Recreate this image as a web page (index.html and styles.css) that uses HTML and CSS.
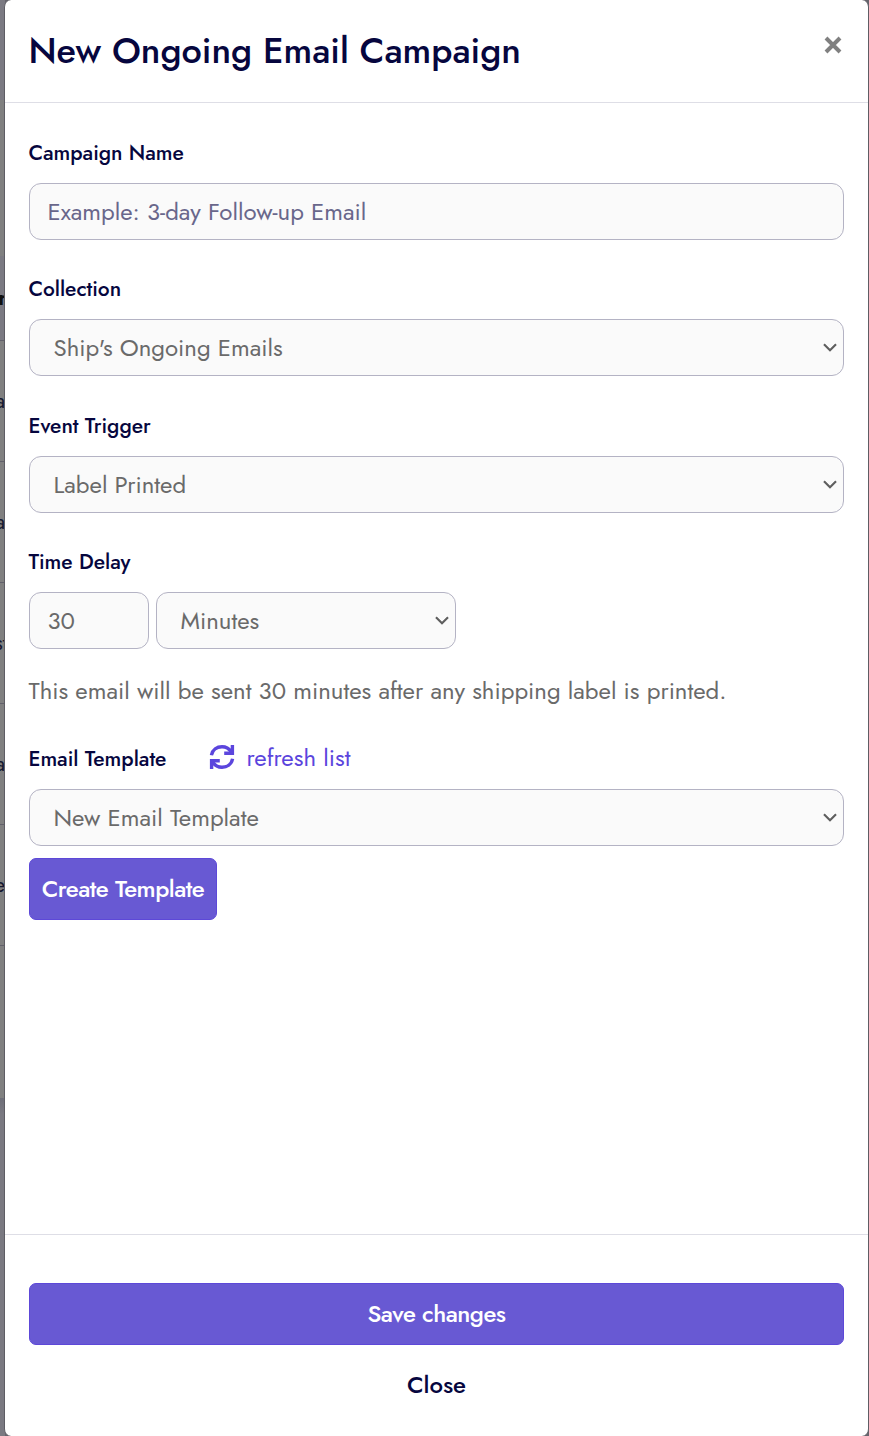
FILE: index.html
```html
<!DOCTYPE html>
<html lang="en">
<head>
    <meta charset="UTF-8">
    <meta name="viewport" content="width=device-width, initial-scale=1.0">
    <title>New Ongoing Email Campaign</title>
    <link rel="stylesheet" href="styles.css">
</head>
<body>
    <!-- Page under the modal -->
    <div class="page">
        <div class="page-top"></div>
        <div class="page-space"></div>
        <div class="page-head"><b>r</b></div>
        <div class="page-row"><span>a</span></div>
        <div class="page-row"><span>a</span></div>
        <div class="page-row middle"><span>st</span></div>
        <div class="page-row"><span>a</span></div>
        <div class="page-row"><span>e</span></div>
        <div class="page-end"></div>
        <div class="page-bottom"></div>
    </div>

    <div class="modal">
        <div class="modal-header">
            <h1>New Ongoing Email Campaign</h1>
            <button type="button" class="close" aria-label="Close">
                <svg width="18" height="18" viewBox="0 0 18 18"><path d="M2 2L16 16M16 2L2 16" stroke="#808080" stroke-width="4" fill="none"/></svg>
            </button>
        </div>

        <div class="modal-body">
            <div class="group">
                <label for="name">Campaign Name</label>
                <input type="text" id="name" class="field" placeholder="Example: 3-day Follow-up Email">
            </div>
            <div class="group">
                <label for="collection">Collection</label>
                <select id="collection" class="field"><option>Ship's Ongoing Emails</option></select>
            </div>
            <div class="group">
                <label for="trigger">Event Trigger</label>
                <select id="trigger" class="field"><option>Label Printed</option></select>
            </div>
            <div class="group delay">
                <label for="delay">Time Delay</label>
                <div class="row">
                    <input type="text" id="delay" class="field amount" value="30">
                    <select class="field unit"><option>Minutes</option></select>
                </div>
            </div>
            <p class="help">This email will be sent 30 minutes after any shipping label is printed.</p>
            <div class="group template">
                <div class="label-row">
                    <label for="template">Email Template</label>
                    <a href="#" class="refresh">
                        <svg width="26" height="26" viewBox="0 0 26 26" fill="none" stroke="#5b45dd" stroke-width="3.4">
                            <path d="M2.4 11.2C3.5 5.5 8 2.8 13 2.8C16.8 2.8 20 4.5 22.2 7.8"/>
                            <path d="M23.4 1V9.2H15.2"/>
                            <path d="M23.6 14.8C22.5 20.5 18 23.2 13 23.2C9.2 23.2 6 21.5 3.8 18.2"/>
                            <path d="M2.6 25V16.8H10.8"/>
                        </svg>
                        <span>refresh list</span>
                    </a>
                </div>
                <select id="template" class="field"><option>New Email Template</option></select>
            </div>
            <button type="button" class="btn create">Create Template</button>
        </div>

        <div class="modal-footer">
            <button type="button" class="btn save">Save changes</button>
            <button type="button" class="btn-link">Close</button>
        </div>
    </div>
</body>
</html>
```
FILE: styles.css
```css
* {
    box-sizing: border-box;
}

body {
    margin: 0;
    height: 1436px;
    overflow: hidden;
    position: relative;
    background: #65646c;
    font-family: Jost, Lato, sans-serif;
    color: #6a6a6a;
}

button, input, select {
    font-family: inherit;
    margin: 0;
}

/* Page under the modal */
.page {
    width: 5px;
    overflow: hidden;
    background: #808080;
    font-size: 21px;
    color: #14172e;
}

.page-top {
    height: 100px;
    background: #7b7a82;
}

.page-space {
    height: 156px;
}

.page-head, .page-row {
    display: flex;
    align-items: center;
    justify-content: flex-end;
    border-bottom: 1px solid #62616b;
}

.page-head {
    height: 85px;
    background: #7b7a82;
    justify-content: center;
    color: #111;
}

.page-row {
    height: 121px;
}

.page-row.middle {
    justify-content: center;
    padding-right: 3px;
}

.page-end {
    height: 152px;
}

.page-bottom {
    height: 338px;
    background: linear-gradient(#6e6e78, #7a7981 16px);
}

/* Modal */
.modal {
    position: absolute;
    top: 0;
    left: 4px;
    width: 865px;
    height: 1436px;
    display: flex;
    flex-direction: column;
    background: #fff;
    border: solid #5e5d64;
    border-width: 0 1px;
    border-radius: 7px;
}

.modal-header {
    height: 103px;
    display: flex;
    justify-content: space-between;
    padding: 0 24px 0 23.4px;
    border-bottom: 1px solid #dedee6;
}

h1 {
    margin: 0;
    font-size: 36px;
    line-height: 100px;
    font-weight: 500;
    color: #06063e;
    white-space: nowrap;
}

.close {
    align-self: flex-start;
    display: flex;
    margin-top: 36px;
    padding: 0 2px 0 0;
    border: 0;
    background: none;
}

.modal-body {
    flex: 1;
    padding: 33.8px 24px 0;
}

.group {
    margin-bottom: 33.4px;
}

label {
    display: block;
    height: 32px;
    margin: 0 0 14px -0.6px;
    font-size: 21px;
    line-height: 33px;
    font-weight: 500;
    color: #06063e;
    white-space: nowrap;
}

.field {
    display: block;
    width: 100%;
    height: 57px;
    padding: 0 17.5px;
    border: 1px solid #b4b3c4;
    border-radius: 12px;
    background: #fafafa;
    font-size: 24px;
    font-weight: 400;
    color: #6a6a6a;
}

.field::placeholder {
    color: #69678b;
    opacity: 1;
}

select.field {
    appearance: none;
    padding: 0 23.5px;
    background: #fafafa url("data:image/svg+xml,%3Csvg xmlns='http://www.w3.org/2000/svg' width='14' height='9'%3E%3Cpath d='M1 1.2L7 7.2L13 1.2' fill='none' stroke='%23606060' stroke-width='2.2'/%3E%3C/svg%3E") no-repeat right 6px center;
}

.row {
    display: flex;
    gap: 7px;
}

.amount {
    width: 120px;
}

.unit {
    width: 300px;
}

.delay {
    margin-bottom: 26px;
}

.help {
    margin: 0 0 36px -0.5px;
    font-size: 24px;
    line-height: 32px;
    white-space: nowrap;
}

.label-row {
    display: flex;
}

.refresh {
    display: flex;
    align-items: center;
    gap: 11.4px;
    height: 30px;
    margin-left: 42.6px;
    font-size: 24px;
    color: #5b45dd;
    text-decoration: none;
}

.refresh svg {
    margin-bottom: 2px;
}

.template {
    margin-bottom: 12px;
}

/* Buttons */
.btn {
    display: block;
    height: 62px;
    padding: 0 0 1px;
    border: 1px solid #5d48d8;
    border-radius: 7px;
    background: #6859d3;
    color: #fff;
    font-size: 24px;
    font-weight: 500;
    letter-spacing: -0.5px;
}

.create {
    width: 188px;
}

.modal-footer {
    height: 202px;
    padding: 48px 24px 0;
    border-top: 1px solid #dedee6;
}

.save {
    width: 100%;
    padding-bottom: 2px;
}

.btn-link {
    display: block;
    width: 100%;
    height: 62px;
    margin-top: 8px;
    border: 0;
    background: none;
    font-size: 24px;
    font-weight: 500;
    color: #06063e;
}
```
